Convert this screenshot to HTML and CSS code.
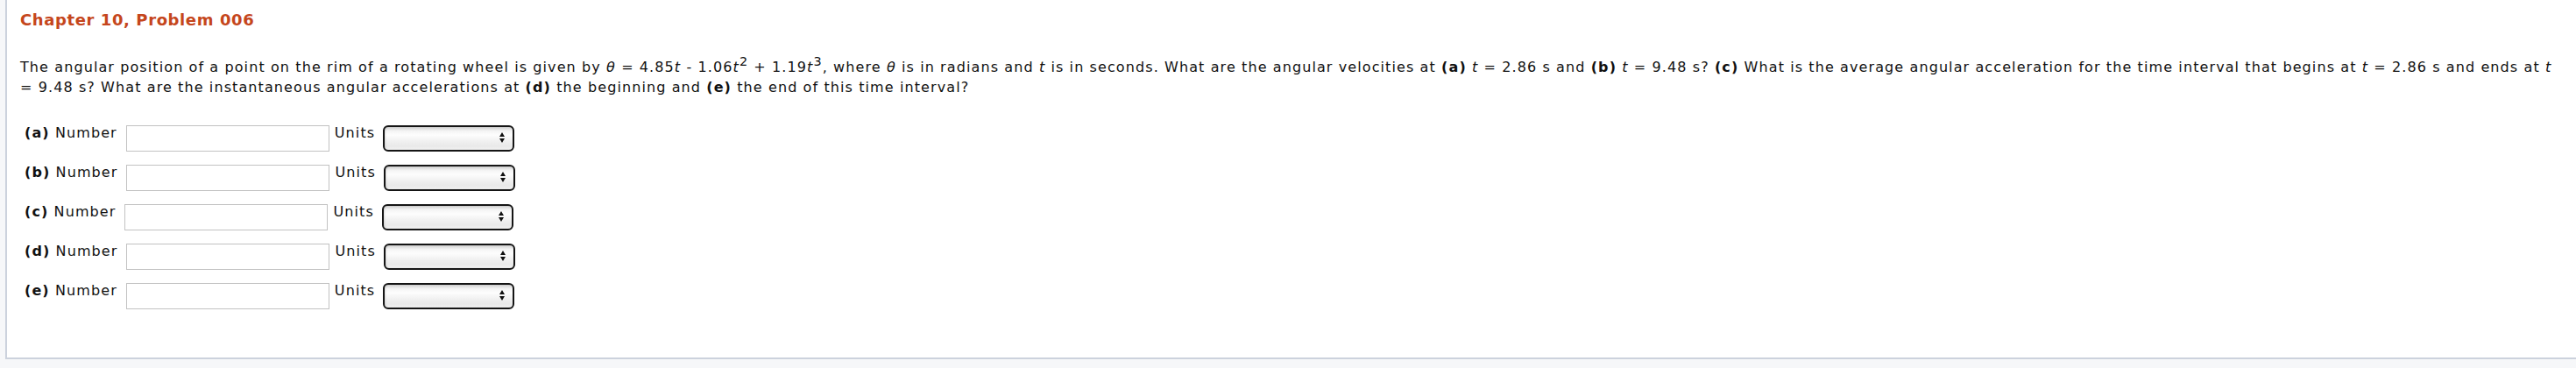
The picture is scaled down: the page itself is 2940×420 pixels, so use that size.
FILE: index.html
```html
<!DOCTYPE html>
<html lang="en">
<head>
    <meta charset="UTF-8">
    <title>Chapter 10, Problem 006</title>
    <link rel="stylesheet" href="styles.css">
</head>
<body>
    <div class="question-box">
        <h2 class="problem-title">Chapter 10, Problem 006</h2>

        <p class="problem-text">The angular position of a point on the rim of a rotating wheel is given by <i>&theta;</i> = 4.85<i>t</i> - 1.06<i>t</i><sup>2</sup> + 1.19<i>t</i><sup>3</sup>, where <i>&theta;</i> is in radians and <i>t</i> is in seconds. What are the angular velocities at <b>(a)</b> <i>t</i> = 2.86 s and <b>(b)</b> <i>t</i> = 9.48 s? <b>(c)</b> What is the average angular acceleration for the time interval that begins at <i>t</i> = 2.86 s and ends at <i>t</i> = 9.48 s? What are the instantaneous angular accelerations at <b>(d)</b> the beginning and <b>(e)</b> the end of this time interval?</p>

        <div class="answers">
            <div class="answer-row">
                <span class="part"><b>(a)</b> Number</span>
                <input type="text" class="number-input">
                <span class="units-label">Units</span>
                <span class="units-select"><select><option></option></select><svg class="arrows" width="8" height="14" viewBox="0 0 8 14"><path d="M4 1 L7 6 L1 6 Z M4 13 L7 8 L1 8 Z" fill="#111"/></svg></span>
            </div>
            <div class="answer-row">
                <span class="part"><b>(b)</b> Number</span>
                <input type="text" class="number-input">
                <span class="units-label">Units</span>
                <span class="units-select"><select><option></option></select><svg class="arrows" width="8" height="14" viewBox="0 0 8 14"><path d="M4 1 L7 6 L1 6 Z M4 13 L7 8 L1 8 Z" fill="#111"/></svg></span>
            </div>
            <div class="answer-row">
                <span class="part"><b>(c)</b> Number</span>
                <input type="text" class="number-input">
                <span class="units-label">Units</span>
                <span class="units-select"><select><option></option></select><svg class="arrows" width="8" height="14" viewBox="0 0 8 14"><path d="M4 1 L7 6 L1 6 Z M4 13 L7 8 L1 8 Z" fill="#111"/></svg></span>
            </div>
            <div class="answer-row">
                <span class="part"><b>(d)</b> Number</span>
                <input type="text" class="number-input">
                <span class="units-label">Units</span>
                <span class="units-select"><select><option></option></select><svg class="arrows" width="8" height="14" viewBox="0 0 8 14"><path d="M4 1 L7 6 L1 6 Z M4 13 L7 8 L1 8 Z" fill="#111"/></svg></span>
            </div>
            <div class="answer-row">
                <span class="part"><b>(e)</b> Number</span>
                <input type="text" class="number-input">
                <span class="units-label">Units</span>
                <span class="units-select"><select><option></option></select><svg class="arrows" width="8" height="14" viewBox="0 0 8 14"><path d="M4 1 L7 6 L1 6 Z M4 13 L7 8 L1 8 Z" fill="#111"/></svg></span>
            </div>
        </div>
    </div>
</body>
</html>
```

FILE: styles.css
```css
:root {
    --title-color: #c5461c;
    --frame-color: #ccd2dd;
    --page-bg: #f6f7f9;
    --text-color: #111;
}

body {
    margin: 0;
    background: var(--page-bg);
    font-family: Verdana, "DejaVu Sans", sans-serif;
    color: var(--text-color);
}

.question-box {
    margin-left: 6px;
    background: #fff;
    border-left: 2px solid var(--frame-color);
    border-bottom: 2px solid var(--frame-color);
    padding: 12px 20px 55px 15px;
}

.problem-title {
    margin: 0;
    font-size: 18px;
    line-height: 22px;
    font-weight: bold;
    letter-spacing: 0.6px;
    color: var(--title-color);
}

.problem-text {
    margin: 31px 0 0;
    font-size: 16px;
    line-height: 23px;
    letter-spacing: 1.1px;
}

.problem-text sup {
    font-size: 0.9em;
    line-height: 0;
    vertical-align: 0.5em;
}

.answers {
    margin-top: 32px;
    padding-left: 5px;
    display: flex;
    flex-direction: column;
    gap: 15px;
}

.answer-row {
    display: flex;
    align-items: flex-start;
    font-size: 16px;
    line-height: 18px;
    letter-spacing: 1.1px;
}

.number-input {
    margin-left: 10px;
    width: 232px;
    height: 30px;
    box-sizing: border-box;
    border: 1px solid #c2c2c2;
    padding: 0 4px;
    font: inherit;
}

.units-label {
    margin-left: 6px;
}

.units-select {
    position: relative;
    margin-left: 9px;
    display: block;
}

.units-select select {
    appearance: none;
    -webkit-appearance: none;
    display: block;
    width: 150px;
    height: 30px;
    box-sizing: border-box;
    border: 2px solid #151515;
    border-radius: 6px;
    background: linear-gradient(to bottom, #d2d2d2 0%, #f5f5f5 18%, #fdfdfd 35%, #eeeeee 68%, #e9e9e9 85%, #f3f3f3 100%);
    box-shadow: inset 1px 0 2px rgba(0, 0, 0, 0.12);
    font: inherit;
}

.arrows {
    position: absolute;
    right: 10px;
    top: 7px;
    pointer-events: none;
}
```
